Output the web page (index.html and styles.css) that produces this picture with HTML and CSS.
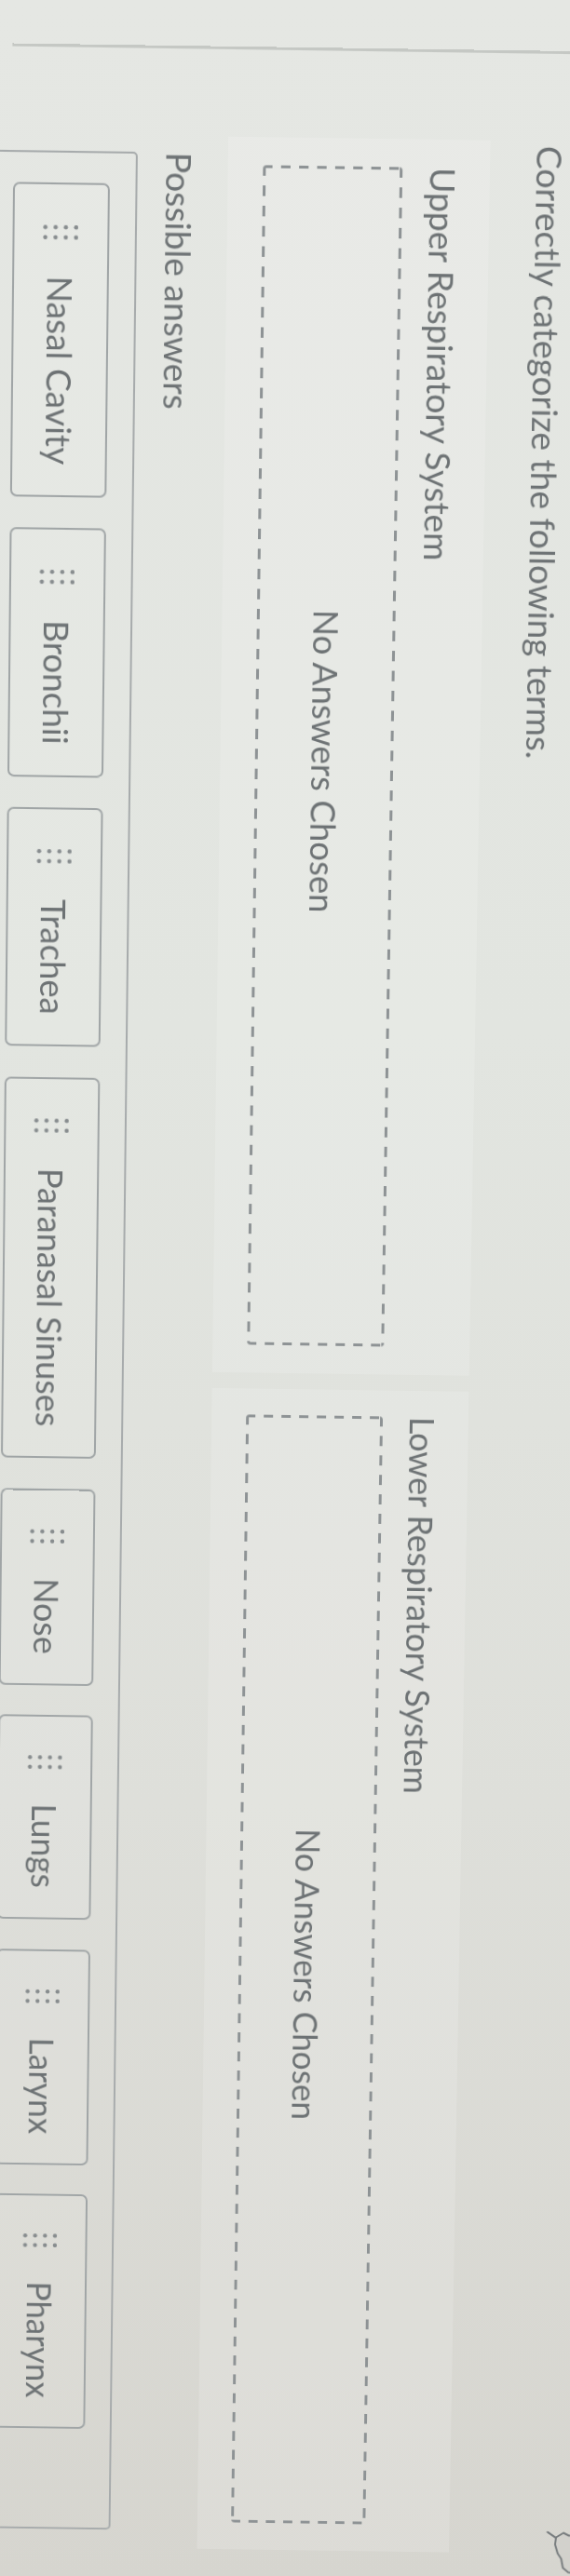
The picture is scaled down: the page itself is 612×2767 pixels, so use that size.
FILE: index.html
```html
<!DOCTYPE html>
<html lang="en">
<head>
<meta charset="utf-8">
<title>Categorize</title>
<link rel="stylesheet" href="styles.css">
</head>
<body>
<div class="screen">
  <main class="page">
    <header class="title-row">
      <h1 class="title">Correctly categorize the following terms.</h1>
      <svg class="pin" viewBox="0 0 30 56" width="30" height="56" aria-hidden="true">
        <path d="M1.7 5.8 L15 14.8" stroke="#767b7d" stroke-width="2.2" stroke-linecap="round" fill="none"/>
        <path d="M11 11.5 L19 6.5 L25 9.5 L31 9 L31 51 L25 50.5 L19 45.5 L17 35.5 L13 29.5 L10 19.5 Z" fill="#d2d1cc" stroke="#767b7d" stroke-width="2" stroke-linejoin="round"/>
      </svg>
    </header>

    <section class="categories">
      <div class="card card-upper">
        <h2 class="card-label">Upper Respiratory System</h2>
        <div class="dropzone"><span>No Answers Chosen</span></div>
      </div>
      <div class="card card-lower">
        <h2 class="card-label">Lower Respiratory System</h2>
        <div class="dropzone"><span>No Answers Chosen</span></div>
      </div>
    </section>

    <section class="answers">
      <h2 class="answers-label">Possible answers</h2>
      <div class="answer-box">
        <div class="tile"><svg class="grip" viewBox="0 0 37 15" aria-hidden="true"><g fill="#878c8e"><circle cx="2.5" cy="2.3" r="2.2"/><circle cx="13.3" cy="2.3" r="2.2"/><circle cx="24.1" cy="2.3" r="2.2"/><circle cx="34.9" cy="2.3" r="2.2"/><circle cx="2.5" cy="12.8" r="2.2"/><circle cx="13.3" cy="12.8" r="2.2"/><circle cx="24.1" cy="12.8" r="2.2"/><circle cx="34.9" cy="12.8" r="2.2"/></g></svg><span>Nasal Cavity</span></div>
        <div class="tile"><svg class="grip" viewBox="0 0 37 15" aria-hidden="true"><g fill="#878c8e"><circle cx="2.5" cy="2.3" r="2.2"/><circle cx="13.3" cy="2.3" r="2.2"/><circle cx="24.1" cy="2.3" r="2.2"/><circle cx="34.9" cy="2.3" r="2.2"/><circle cx="2.5" cy="12.8" r="2.2"/><circle cx="13.3" cy="12.8" r="2.2"/><circle cx="24.1" cy="12.8" r="2.2"/><circle cx="34.9" cy="12.8" r="2.2"/></g></svg><span>Bronchii</span></div>
        <div class="tile"><svg class="grip" viewBox="0 0 37 15" aria-hidden="true"><g fill="#878c8e"><circle cx="2.5" cy="2.3" r="2.2"/><circle cx="13.3" cy="2.3" r="2.2"/><circle cx="24.1" cy="2.3" r="2.2"/><circle cx="34.9" cy="2.3" r="2.2"/><circle cx="2.5" cy="12.8" r="2.2"/><circle cx="13.3" cy="12.8" r="2.2"/><circle cx="24.1" cy="12.8" r="2.2"/><circle cx="34.9" cy="12.8" r="2.2"/></g></svg><span>Trachea</span></div>
        <div class="tile"><svg class="grip" viewBox="0 0 37 15" aria-hidden="true"><g fill="#878c8e"><circle cx="2.5" cy="2.3" r="2.2"/><circle cx="13.3" cy="2.3" r="2.2"/><circle cx="24.1" cy="2.3" r="2.2"/><circle cx="34.9" cy="2.3" r="2.2"/><circle cx="2.5" cy="12.8" r="2.2"/><circle cx="13.3" cy="12.8" r="2.2"/><circle cx="24.1" cy="12.8" r="2.2"/><circle cx="34.9" cy="12.8" r="2.2"/></g></svg><span>Paranasal Sinuses</span></div>
        <div class="tile"><svg class="grip" viewBox="0 0 37 15" aria-hidden="true"><g fill="#878c8e"><circle cx="2.5" cy="2.3" r="2.2"/><circle cx="13.3" cy="2.3" r="2.2"/><circle cx="24.1" cy="2.3" r="2.2"/><circle cx="34.9" cy="2.3" r="2.2"/><circle cx="2.5" cy="12.8" r="2.2"/><circle cx="13.3" cy="12.8" r="2.2"/><circle cx="24.1" cy="12.8" r="2.2"/><circle cx="34.9" cy="12.8" r="2.2"/></g></svg><span>Nose</span></div>
        <div class="tile"><svg class="grip" viewBox="0 0 37 15" aria-hidden="true"><g fill="#878c8e"><circle cx="2.5" cy="2.3" r="2.2"/><circle cx="13.3" cy="2.3" r="2.2"/><circle cx="24.1" cy="2.3" r="2.2"/><circle cx="34.9" cy="2.3" r="2.2"/><circle cx="2.5" cy="12.8" r="2.2"/><circle cx="13.3" cy="12.8" r="2.2"/><circle cx="24.1" cy="12.8" r="2.2"/><circle cx="34.9" cy="12.8" r="2.2"/></g></svg><span>Lungs</span></div>
        <div class="tile"><svg class="grip" viewBox="0 0 37 15" aria-hidden="true"><g fill="#878c8e"><circle cx="2.5" cy="2.3" r="2.2"/><circle cx="13.3" cy="2.3" r="2.2"/><circle cx="24.1" cy="2.3" r="2.2"/><circle cx="34.9" cy="2.3" r="2.2"/><circle cx="2.5" cy="12.8" r="2.2"/><circle cx="13.3" cy="12.8" r="2.2"/><circle cx="24.1" cy="12.8" r="2.2"/><circle cx="34.9" cy="12.8" r="2.2"/></g></svg><span>Larynx</span></div>
        <div class="tile"><svg class="grip" viewBox="0 0 37 15" aria-hidden="true"><g fill="#878c8e"><circle cx="2.5" cy="2.3" r="2.2"/><circle cx="13.3" cy="2.3" r="2.2"/><circle cx="24.1" cy="2.3" r="2.2"/><circle cx="34.9" cy="2.3" r="2.2"/><circle cx="2.5" cy="12.8" r="2.2"/><circle cx="13.3" cy="12.8" r="2.2"/><circle cx="24.1" cy="12.8" r="2.2"/><circle cx="34.9" cy="12.8" r="2.2"/></g></svg><span>Pharynx</span></div>
      </div>
    </section>
  </main>
</div>
</body>
</html>
```

FILE: styles.css
```css
html, body {
  margin: 0;
  padding: 0;
}

body {
  width: 612px;
  height: 2767px;
  overflow: hidden;
  background: linear-gradient(180deg, #e5e7e3 0%, #e2e5e0 40%, #dedfda 70%, #d6d5cf 100%);
  font-family: Lato, "Noto Sans", "Liberation Sans", sans-serif;
  color: #6d7274;
}

/* the photographed screen: slightly turned and tilted away at the bottom */
.screen {
  width: 612px;
  height: 2800px;
  transform-origin: 306px 1383px;
  transform: rotate(0.812deg) perspective(2000px) rotateX(-1.753deg);
}

.page {
  writing-mode: vertical-rl;
  box-sizing: border-box;
  width: 612px;
  height: 2720.5px;
  margin-top: 79.5px;
  border-top: 3px solid #c5c8c4;
}

.title-row {
  display: flex;
  justify-content: space-between;
  align-items: flex-start;
  margin-block-start: 30.7px;
  padding-inline-start: 95px;
  padding-inline-end: 10px;
}

.title {
  margin: 0;
  font-size: 36px;
  font-weight: 400;
  line-height: 0.8;
}

.pin {
  flex: none;
  width: 30px;
  height: 56px;
  margin-block-start: -58.7px;
}

.categories {
  display: flex;
  gap: 17px;
  margin-block-start: 48.5px;
  padding-inline-start: 90.3px;
}

.card {
  flex: none;
  box-sizing: border-box;
  block-size: 276px;
  padding-block: 28.5px 37px;
  padding-inline: 29px 30px;
  background: rgba(255, 255, 255, 0.15);
}

.card-upper {
  inline-size: 1302px;
}

.card-lower {
  inline-size: 1273px;
  padding-inline-start: 28px;
}

.card-label {
  margin: 0;
  font-size: 36px;
  font-weight: 400;
  line-height: 1.2;
}

.dropzone {
  box-sizing: border-box;
  margin-block-start: 20.3px;
  block-size: 147px;
  border-radius: 4px;
  display: flex;
  align-items: center;
  justify-content: center;
  font-size: 36px;
  line-height: 1.2;
  background:
    repeating-linear-gradient(to bottom, #8e9395 0 11px, transparent 11px 21px) left top / 3px 100% no-repeat,
    repeating-linear-gradient(to bottom, #8e9395 0 11px, transparent 11px 21px) right top / 3px 100% no-repeat,
    repeating-linear-gradient(to right, #8e9395 0 10px, transparent 10px 19px) left top / 100% 3px no-repeat,
    repeating-linear-gradient(to right, #8e9395 0 10px, transparent 10px 19px) left bottom / 100% 3px no-repeat;
}

.answers {
  margin-block-start: 30.1px;
  padding-inline-start: 106.7px;
  padding-inline-end: 55.2px;
}

.answers-label {
  margin: 0;
  font-size: 36px;
  font-weight: 400;
  line-height: 1.2;
}

.answer-box {
  box-sizing: border-box;
  margin-block-start: 21.7px;
  block-size: 200px;
  border: 2px solid #a7abac;
  border-radius: 5px;
  padding-block-start: 27.5px;
  padding-inline-start: 31px;
  display: flex;
  align-items: flex-start;
  gap: 32.5px;
}

.tile {
  flex: none;
  box-sizing: border-box;
  block-size: 101.5px;
  display: flex;
  align-items: center;
  gap: 38px;
  padding-inline: 42px 32px;
  border: 2px solid #a0a5a6;
  border-radius: 7px;
  font-size: 36px;
  line-height: 1.2;
  background: rgba(255, 255, 255, 0.08);
}

.grip {
  flex: none;
  width: 37px;
  height: 15px;
}
```
